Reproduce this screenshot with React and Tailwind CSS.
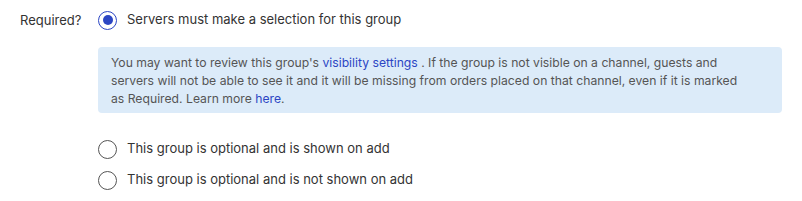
import React from 'react'

const Radio = ({ checked }) => (
  <span
    className={`flex h-[19px] w-[19px] shrink-0 items-center justify-center rounded-full border-[1.5px] ${
      checked ? 'border-[#2c46c4]' : 'border-[#555555]'
    }`}
  >
    {checked && <span className="h-[10px] w-[10px] rounded-full bg-[#2c46c4]" />}
  </span>
)

const Option = ({ checked, label, className = '' }) => (
  <label className={`flex items-center gap-[10px] ${className}`}>
    <Radio checked={checked} />
    <span className="text-[13px] text-[#333333]">{label}</span>
  </label>
)

export default function App() {
  return (
    <div
      className="flex h-[201px] w-[802px] bg-white pl-[20px] pt-[10px]"
      style={{ fontFamily: 'Inter, "Noto Sans", sans-serif' }}
    >
      <div className="w-[78px] shrink-0 text-[13px] leading-[20px] text-[#333333]">Required?</div>
      <div className="flex w-[684px] flex-col">
        <Option checked label="Servers must make a selection for this group" className="h-[20px]" />
        <div className="mt-[17px] rounded-[4px] bg-[#dcebf9] pb-[5px] pl-[13px] pr-[31px] pt-[7px] text-[12.2px] leading-[18px] text-[#555555]">
          You may want to review this group's{' '}
          <a className="text-[#2c46c4]">visibility settings</a> . If the group is not visible on a
          channel, guests and servers will not be able to see it and it will be missing from orders
          placed on that channel, even if it is marked as Required. Learn more{' '}
          <a className="text-[#2c46c4]">here</a>.
        </div>
        <Option label="This group is optional and is shown on add" className="mt-[26px] h-[20px]" />
        <Option label="This group is optional and is not shown on add" className="mt-[11px] h-[20px]" />
      </div>
    </div>
  )
}
